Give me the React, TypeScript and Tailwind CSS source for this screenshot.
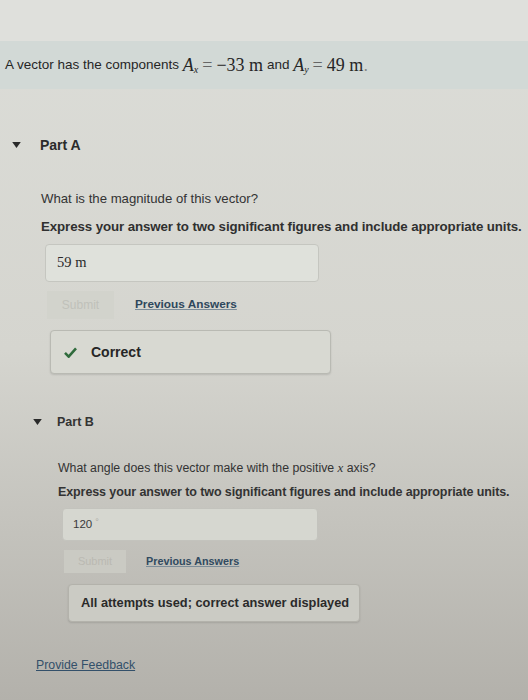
import React from 'react';

const sans = { fontFamily: '"Liberation Sans", Arial, sans-serif' };

const Caret: React.FC<{ className?: string }> = ({ className = '' }) => (
  <svg viewBox="0 0 10 7" className={className} aria-hidden>
    <path d="M0 0 L10 0 L5 7 Z" fill="#2a2a2a" />
  </svg>
);

const Check: React.FC = () => (
  <svg viewBox="0 0 14 12" className="w-[13px] h-[11px]" aria-hidden>
    <path d="M1 6.5 L5 10.5 L13 1.5" fill="none" stroke="#2f6b3c" strokeWidth="2.8" strokeLinejoin="miter" />
  </svg>
);

const Math: React.FC<{ children: React.ReactNode; className?: string }> = ({ children, className = '' }) => (
  <span className={`font-['Liberation_Serif',serif] ${className}`}>{children}</span>
);

export default function App() {
  return (
    <div
      className="w-[528px] h-[700px] overflow-hidden bg-linear-to-b from-[#dcddd8] via-[#d5d5cf] to-[#b3b1ab] text-[#2b2b2b]"
      style={sans}
    >
      <div className="h-[41px] bg-[#dfe0dc]" />
      <div className="h-[48px] bg-[#d2d9d6] flex items-center pl-[5px] text-[13.5px] text-[#262626]">
        <span>A vector has the components&nbsp;</span>
        <Math className="text-[18px]">
          <i>A</i>
          <sub className="text-[10px] italic">x</sub>
          <span className="mx-[4px] text-[#666]">=</span>−33 m
        </Math>
        <span>&nbsp;and&nbsp;</span>
        <Math className="text-[18px]">
          <i>A</i>
          <sub className="text-[10px] italic">y</sub>
          <span className="mx-[4px] text-[#666]">=</span>49 m
        </Math>
        <span className="text-[#8a8a86] text-[18px]">.</span>
      </div>

      {/* Part A */}
      <div className="mt-[48px] flex items-center h-[16px]">
        <Caret className="w-[9px] h-[6px] ml-[12px]" />
        <span className="ml-[19px] text-[14px] font-bold">Part A</span>
      </div>
      <div className="pl-[41px]">
        <div className="mt-[38px] h-[16px] leading-[16px] text-[13.2px] text-[#333]">What is the magnitude of this vector?</div>
        <div className="mt-[12px] h-[16px] leading-[16px] text-[13.3px] font-bold tracking-[-0.1px] text-[#303030]">
          Express your answer to two significant figures and include appropriate units.
        </div>
        <div className="mt-[9px] ml-[4px] w-[274px] h-[38px] rounded-[4px] border border-[#c5c6c0] bg-[#dfe1db] flex items-center pl-[11px]">
          <Math className="text-[14.5px] text-[#2a2a2a]">59 m</Math>
        </div>
        <div className="mt-[9px] flex items-center">
          <div className="ml-[6px] w-[67px] h-[28px] bg-[#d2d3cc] flex items-center justify-center text-[12px] text-[#c0c1ba]">
            Submit
          </div>
          <span className="ml-[21px] text-[11.8px] font-bold underline decoration-[#7d8d99] text-[#2e475c]">Previous Answers</span>
        </div>
        <div className="mt-[11px] ml-[9px] w-[281px] h-[44px] rounded-[4px] border border-[#b9bab3] bg-[#d8d9d2] shadow-[0_1px_2px_rgba(0,0,0,0.12)] flex items-center pl-[13px]">
          <Check />
          <span className="ml-[14px] text-[14px] font-bold text-[#262626]">Correct</span>
        </div>
      </div>

      {/* Part B */}
      <div className="mt-[40px] flex items-center h-[16px]">
        <Caret className="w-[9px] h-[6px] ml-[33px]" />
        <span className="ml-[15px] text-[12.5px] font-bold text-[#333]">Part B</span>
      </div>
      <div className="pl-[58px]">
        <div className="mt-[31px] h-[14px] leading-[14px] text-[12.3px] text-[#333]">
          What angle does this vector make with the positive <Math className="italic text-[13px]">x</Math> axis?
        </div>
        <div className="mt-[10px] h-[14px] leading-[14px] text-[12.5px] font-bold tracking-[-0.1px] text-[#333]">
          Express your answer to two significant figures and include appropriate units.
        </div>
        <div className="mt-[9px] ml-[4px] w-[256px] h-[33px] rounded-[4px] border border-[#c3c3bd] bg-[#d6d7d0] flex items-center pl-[10px]">
          <span className="text-[11.5px] text-[#3a3a3a]">120</span>
          <span className="ml-[3px] -mt-[4px] text-[9px] text-[#aaaaa4]">°</span>
        </div>
        <div className="mt-[9px] flex items-center">
          <div className="ml-[6px] w-[62px] h-[23px] bg-[#cacac3] flex items-center justify-center text-[11px] text-[#bab9b2]">
            Submit
          </div>
          <span className="ml-[20px] text-[10.8px] font-bold underline decoration-[#7d8d99] text-[#304a60]">Previous Answers</span>
        </div>
        <div className="mt-[11px] ml-[10px] w-[292px] h-[38px] rounded-[4px] border border-[#b3b2ab] bg-[#cbcbc4] shadow-[0_1px_2px_rgba(0,0,0,0.12)] flex items-center pl-[12px]">
          <span className="text-[12.8px] font-bold text-[#2a2a2a]">All attempts used; correct answer displayed</span>
        </div>
      </div>

      <div className="mt-[34px] pl-[36px] h-[16px] leading-[16px]">
        <span className="text-[12.3px] underline text-[#33506a]">Provide Feedback</span>
      </div>
    </div>
  );
}
